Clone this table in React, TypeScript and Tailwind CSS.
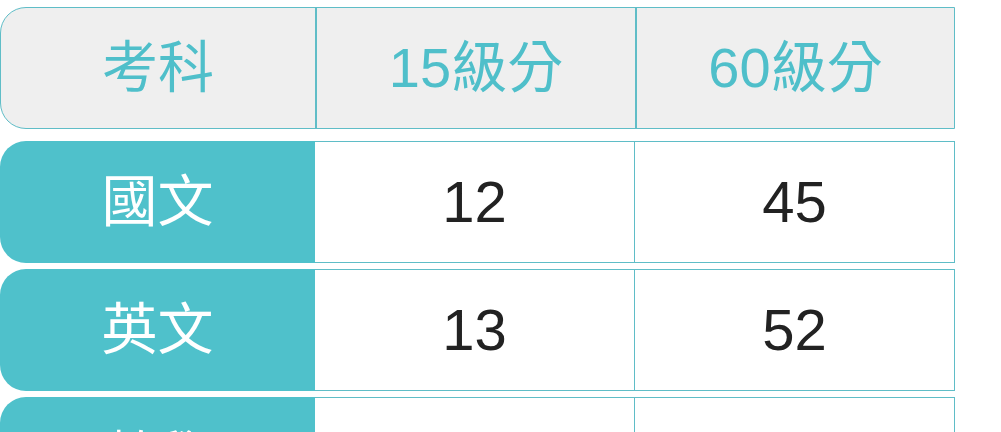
import React from "react";

const rows = [
  { subject: "國文", a: "12", b: "45" },
  { subject: "英文", a: "13", b: "52" },
  { subject: "數學", a: "14", b: "56" },
];

export default function App() {
  return (
    <div
      className="w-[1001px] h-[432px] overflow-hidden bg-white pt-[7px]"
      style={{ fontFamily: '"Liberation Sans", "Noto Sans CJK TC", sans-serif' }}
    >
      <div className="w-[955px] flex flex-col">
        <div className="flex h-[122px] bg-[#efefef] border border-[#5fbdc7] rounded-l-[26px] text-[#4fbfca] text-[56px] leading-none">
          <div className="w-[314px] flex items-center justify-center">考科</div>
          <div className="w-[320px] flex items-center justify-center border-l-2 border-[#5fbdc7]">15級分</div>
          <div className="flex-1 flex items-center justify-center border-l-2 border-[#5fbdc7]">60級分</div>
        </div>
        <div className="flex flex-col gap-[6px] mt-[12px]">
          {rows.map((r) => (
            <div key={r.subject} className="flex h-[122px] text-[56px] leading-none">
              <div className="w-[315px] flex items-center justify-center bg-[#4fc1cb] text-white rounded-l-[26px]">
                {r.subject}
              </div>
              <div className="w-[320px] flex items-center justify-center border border-l-0 border-[#5fbdc7] text-[#222222] text-[58px]">
                {r.a}
              </div>
              <div className="flex-1 flex items-center justify-center border border-l-0 border-[#5fbdc7] text-[#222222] text-[58px]">
                {r.b}
              </div>
            </div>
          ))}
        </div>
      </div>
    </div>
  );
}
